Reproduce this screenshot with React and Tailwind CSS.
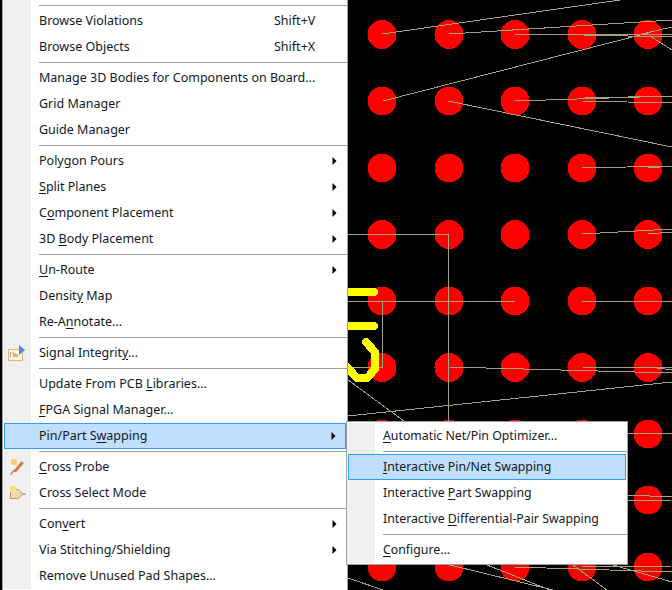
const font = "font-['Noto_Sans','Noto_Sans_CJK_SC',sans-serif]";

function Arrow() {
  return (
    <svg width="5" height="8" viewBox="0 0 5 8" className="shrink-0">
      <path d="M0.5 0 L4.5 4 L0.5 8 Z" fill="#000" />
    </svg>
  );
}

function SignalIcon() {
  return (
    <svg width="18" height="16" viewBox="0 0 18 16">
      <rect x="0.5" y="4.5" width="14" height="11" fill="#fdf3dc" stroke="#e0b57c" />
      <path d="M2.5 7 V12 M5 7 L6 12 L7 8 L8 12 L9 9 L10 12" fill="none" stroke="#c9a98a" strokeWidth="1" />
      <path d="M11 0 L17 5 L11 10 Z" fill="#4f87d8" />
    </svg>
  );
}

function ProbeIcon() {
  return (
    <svg width="16" height="16" viewBox="0 0 16 16">
      <path d="M1.5 15.5 L5.5 11" stroke="#8a8a8a" strokeWidth="1.2" />
      <path d="M4.5 12 L12.5 2.5 L14.5 4 L7 13 Z" fill="#ec6d45" stroke="#d9704a" strokeWidth="0.5" />
      <rect x="2" y="0" width="6" height="6" fill="#fbe38a" />
      <path d="M2 2 H8 M2 4 H8 M4 0 V6 M6 0 V6" stroke="#f3b95f" strokeWidth="0.7" />
    </svg>
  );
}

function SelectIcon() {
  return (
    <svg width="17" height="14" viewBox="0 0 17 14">
      <path d="M1.5 3.5 H9 L14 8 L9 12.5 H1.5 Z" fill="#efdcae" stroke="#b59a6a" />
      <path d="M14 8 H17" stroke="#8a7a5a" />
      <rect x="1" y="0" width="6" height="6" fill="#fff3a0" />
      <path d="M1 2 H7 M1 4 H7 M3 0 V6 M5 0 V6" stroke="#f0c860" strokeWidth="0.7" />
    </svg>
  );
}

function Label({ text, u }) {
  if (u === undefined) return <span>{text}</span>;
  return (
    <span>
      {text.slice(0, u)}
      <span className="underline underline-offset-2">{text[u]}</span>
      {text.slice(u + 1)}
    </span>
  );
}

function Row({ text, u, shortcut, sub, icon, active }) {
  if (active) {
    return (
      <div className="flex h-[26px] items-center border border-[#3399ff] bg-[#c0dffd] mx-px pl-[34px] pr-[9px] text-[#111827]">
        <div className="flex-1 whitespace-nowrap">
          <Label text={text} u={u} />
        </div>
        {sub && <Arrow />}
      </div>
    );
  }
  return (
    <div className="flex h-[26px] items-stretch text-[#111827]">
      <div className="flex w-7 shrink-0 items-center justify-center bg-[#f0f0f0]">{icon}</div>
      <div className="flex flex-1 items-center pl-2 pr-[10px]">
        <div className="flex-1 whitespace-nowrap">
          <Label text={text} u={u} />
        </div>
        {shortcut && <div className="w-[63px] whitespace-nowrap">{shortcut}</div>}
        {sub && <Arrow />}
      </div>
    </div>
  );
}

function Sep() {
  return (
    <div className="flex h-[5px] items-stretch">
      <div className="w-7 shrink-0 bg-[#f0f0f0]" />
      <div className="flex flex-1 items-center pl-2">
        <div className="h-px w-full bg-[#a0a0a0]" />
      </div>
    </div>
  );
}

const pads = [];
[382, 449, 515, 582, 648].forEach((x) => {
  [34.5, 101, 168, 234.5, 301, 367.5, 434, 500, 567].forEach((y) => pads.push([x, y]));
});

const wires = [
  "382,34 620,0", "449,34 672,20", "515,34 672,34", "583,35 672,37", "642,34 672,27", "650,36 672,50",
  "383,101 648,33", "448,101 672,147", "515,101 672,96", "582,101 672,103", "585,98 672,96",
  "582,168 672,166", "648,168 672,166", "348,234 448.5,234 448.5,421", "582,234 672,229", "648,234 672,232",
  "348,301 515,301", "582,301 672,301", "648,301 672,302", "382,301 382,367 348,367", "449,367 672,373",
  "582,367 672,368", "650,367 672,370", "348,416 672,382", "348,380 404,421", "627,433 672,433",
  "627,495 672,497", "627,501 672,500", "450,565 553,590", "487,565 550,590", "515,567 672,572",
  "582,567 672,566", "573,565 607,590", "348,578 383,590", "613,565 672,582",
];

function Board() {
  return (
    <svg className="block h-full w-full" viewBox="348 0 324 590" shapeRendering="crispEdges">
      {pads.map(([x, y]) => (
        <circle key={x + "-" + y} cx={x} cy={y} r="14.5" fill="#ff0000" />
      ))}
      {wires.map((w) => (
        <polyline key={w} points={w} fill="none" stroke="#a3a380" strokeWidth="1" />
      ))}
      <path d="M346 292 H374 M346 326 H374" stroke="#ffff00" strokeWidth="8" strokeLinecap="round" />
      <polyline points="366,342 375,352 375,369 367,378 357,378 347,367" fill="none" stroke="#ffff00" strokeWidth="8" strokeLinejoin="round" strokeLinecap="round" />
    </svg>
  );
}

export default function App() {
  return (
    <div className={`relative flex h-[590px] w-[672px] overflow-hidden bg-black text-[12.5px] leading-none ${font}`}>
      {/* main menu */}
      <div className="ml-[2px] w-[346px] h-full shrink-0 border-l border-r border-[#a0a0a0] bg-white">
        <div className="h-[3px] w-7 bg-[#f0f0f0]" />
        <Sep />
        <Row text="Browse Violations" shortcut="Shift+V" />
        <Row text="Browse Objects" shortcut="Shift+X" />
        <Sep />
        <Row text="Manage 3D Bodies for Components on Board..." />
        <Row text="Grid Manager" />
        <Row text="Guide Manager" />
        <Sep />
        <Row text="Polygon Pours" u={4} sub />
        <Row text="Split Planes" u={0} sub />
        <Row text="Component Placement" u={1} sub />
        <Row text="3D Body Placement" u={3} sub />
        <Sep />
        <Row text="Un-Route" u={0} sub />
        <Row text="Density Map" u={6} />
        <Row text="Re-Annotate..." u={4} />
        <Sep />
        <Row text="Signal Integrity..." u={15} icon={<SignalIcon />} />
        <Sep />
        <Row text="Update From PCB Libraries..." u={16} />
        <Row text="FPGA Signal Manager..." u={0} />
        <Row text="Pin/Part Swapping" u={10} sub active />
        <Sep />
        <Row text="Cross Probe" u={0} icon={<ProbeIcon />} />
        <Row text="Cross Select Mode" icon={<SelectIcon />} />
        <Sep />
        <Row text="Convert" u={3} sub />
        <Row text="Via Stitching/Shielding" u={12} sub />
        <Row text="Remove Unused Pad Shapes..." />
      </div>

      {/* pcb canvas */}
      <div className="h-full flex-1">
        <Board />
      </div>

      {/* submenu */}
      <div className="absolute left-[346px] top-[421px] w-[282px] border border-[#a0a0a0] bg-white py-px text-[12.3px]">
        <Row text="Automatic Net/Pin Optimizer..." u={0} />
        <Sep />
        <Row text="Interactive Pin/Net Swapping" u={0} active />
        <Row text="Interactive Part Swapping" u={12} />
        <Row text="Interactive Differential-Pair Swapping" u={12} />
        <Sep />
        <Row text="Configure..." u={0} />
      </div>
    </div>
  );
}
